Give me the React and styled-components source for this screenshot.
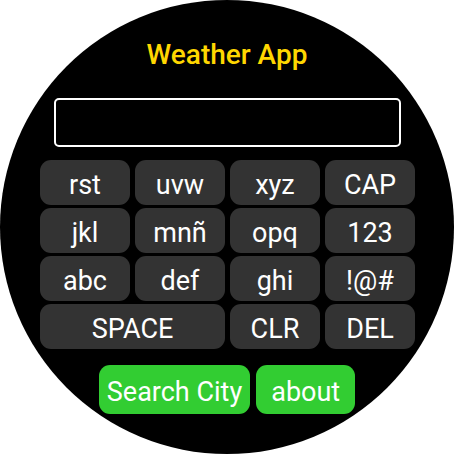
import React from "react";
import styled, { createGlobalStyle } from "styled-components";

const Global = createGlobalStyle`
  html, body { margin: 0; padding: 0; background: #fff; }
  body { font-family: Roboto, "Liberation Sans", sans-serif; }
`;

const Watch = styled.div`
  width: 454px;
  height: 454px;
  border-radius: 50%;
  background: #000;
  display: flex;
  flex-direction: column;
  align-items: center;
  box-sizing: border-box;
  padding-top: 39px;
  overflow: hidden;
`;

const Title = styled.h1`
  margin: 0;
  font-size: 28px;
  line-height: 32px;
  font-weight: 500;
  color: #ffd700;
`;

const Field = styled.div`
  margin-top: 27px;
  width: 347px;
  height: 49px;
  box-sizing: border-box;
  border: 2px solid #fff;
  border-radius: 5px;
  margin-left: 1px;
`;

const Keyboard = styled.div`
  margin-top: 13px;
  display: grid;
  grid-template-columns: repeat(4, 90px);
  grid-auto-rows: 45px;
  column-gap: 5px;
  row-gap: 3px;
  margin-left: 1px;
`;

const Key = styled.button`
  grid-column: span ${(p) => p.$span || 1};
  border: none;
  border-radius: 11px;
  background: #333333;
  color: #fff;
  font-family: Roboto, "Liberation Sans", sans-serif;
  font-size: 27px;
  font-weight: 400;
  padding: 4px 0 0;
  display: flex;
  align-items: center;
  justify-content: center;
`;

const Actions = styled.div`
  margin-top: 16px;
  display: flex;
  gap: 6px;
`;

const Action = styled.button`
  height: 49px;
  min-width: 99px;
  padding: 4px 8px 0;
  border: none;
  border-radius: 11px;
  background: #32cd32;
  color: #fff;
  font-family: Roboto, "Liberation Sans", sans-serif;
  font-size: 27px;
  font-weight: 400;
`;

const rows = [
  ["rst", "uvw", "xyz", "CAP"],
  ["jkl", "mnñ", "opq", "123"],
  ["abc", "def", "ghi", "!@#"],
];

export default function App() {
  return (
    <>
      <Global />
      <Watch>
        <Title>Weather App</Title>
        <Field />
        <Keyboard>
          {rows.flat().map((k) => (
            <Key key={k}>{k}</Key>
          ))}
          <Key $span={2}>SPACE</Key>
          <Key>CLR</Key>
          <Key>DEL</Key>
        </Keyboard>
        <Actions>
          <Action>Search City</Action>
          <Action>about</Action>
        </Actions>
      </Watch>
    </>
  );
}
